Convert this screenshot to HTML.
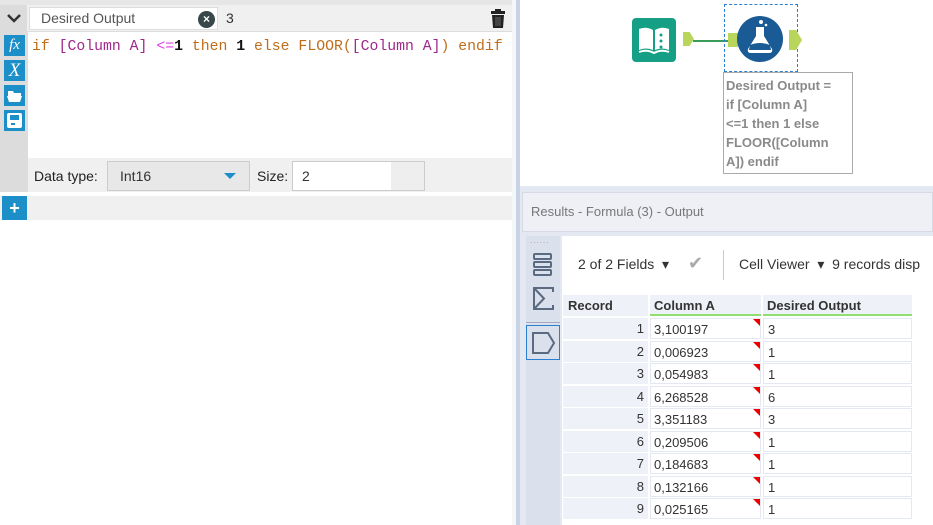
<!DOCTYPE html>
<html><head><style>
*{margin:0;padding:0;box-sizing:border-box}
body{width:933px;height:525px;overflow:hidden;background:#fff;font-family:"Liberation Sans",sans-serif;position:relative}
.a{position:absolute}
.mono{font-family:"Liberation Mono",monospace}
.ic{position:absolute;left:4px;width:21px;height:21px;background:#1c8fc8;color:#fff;text-align:center;font-size:15px;line-height:21px}
.cell{position:absolute;height:21px;font-size:13px;line-height:21px;color:#333}
</style></head><body>
<!-- left panel -->
<div class="a" style="left:0;top:0;width:512px;height:5px;background:#e6e6e6"></div>
<div class="a" style="left:0;top:5px;width:512px;height:27px;background:#f0f0f0;border-bottom:1px solid #ddd"></div>
<div class="a" style="left:0;top:5px;width:27px;height:27px;background:#dcdcdc"></div>
<svg class="a" style="left:6px;top:13px" width="16" height="10"><path d="M2 2l6 6 6-6" fill="none" stroke="#333" stroke-width="2.5"/></svg>
<div class="a" style="left:29px;top:7px;width:189px;height:23px;background:#fff;border:1px solid #ddd;font-size:14px;line-height:21px;padding-left:11px;color:#555">Desired Output</div>
<div class="a" style="left:198px;top:11px;width:17px;height:17px;border-radius:50%;background:#37474a;color:#fff;font-size:12px;text-align:center;line-height:17px;font-weight:bold">×</div>
<div class="a" style="left:226px;top:10px;font-size:14px;color:#333">3</div>
<svg class="a" style="left:490px;top:9px" width="16" height="20"><rect x="1" y="2" width="14" height="3" fill="#222"/><rect x="5" y="0" width="6" height="3" fill="#222"/><path d="M2 6h12l-1 13H3z" fill="#222"/><path d="M6 8v9M8 8v9M10 8v9" stroke="#666"/></svg>
<div class="a" style="left:0;top:32px;width:28px;height:160px;background:#dcdcdc"></div>
<div class="ic" style="top:35px;font-family:'Liberation Serif',serif;font-style:italic">fx</div>
<div class="ic" style="top:60px;font-family:'Liberation Serif',serif;font-style:italic;font-size:19px">X</div>
<div class="ic" style="top:85px"><svg width="21" height="21"><path d="M4 6h5l1 2h7v3H4z" fill="#fff"/><path d="M3 11h15l-2 6H5z" fill="#fff"/></svg></div>
<div class="ic" style="top:110px"><svg width="21" height="21"><rect x="3" y="3" width="15" height="15" rx="2" fill="#fff"/><rect x="6" y="5" width="9" height="5" fill="#1c8fc8"/><rect x="7" y="13" width="4" height="2" fill="#1c8fc8"/></svg></div>
<div class="a mono" style="left:32px;top:39px;font-size:14.8px;white-space:pre;color:#c06d1a">if <span style="color:#a0288a">[Column A]</span> <span style="color:#e040e0">&lt;=</span><span style="color:#111;font-weight:bold">1</span> then <span style="color:#111;font-weight:bold">1</span> else FLOOR(<span style="color:#a0288a">[Column A]</span>) endif</div>
<div class="a" style="left:28px;top:158px;width:484px;height:34px;background:#f0f0f0"></div>
<div class="a" style="left:34px;top:168px;font-size:14px;color:#222">Data type:</div>
<div class="a" style="left:107px;top:161px;width:143px;height:30px;background:#e8e8e8;border:1px solid #ccc;font-size:14px;line-height:28px;padding-left:12px;color:#333">Int16</div>
<div class="a" style="left:224px;top:173px;width:0;height:0;border-left:6px solid transparent;border-right:6px solid transparent;border-top:6px solid #1c8fc8"></div>
<div class="a" style="left:257px;top:168px;font-size:14px;color:#222">Size:</div>
<div class="a" style="left:292px;top:161px;width:133px;height:30px;background:#fff;border:1px solid #ccc;font-size:14px;line-height:28px;padding-left:9px;color:#333">2</div>
<div class="a" style="left:391px;top:162px;width:33px;height:28px;background:#eee"></div>
<div class="a" style="left:0;top:196px;width:512px;height:24px;background:#f0f0f0"></div>
<div class="a" style="left:2px;top:196px;width:25px;height:24px;background:#1c8fc8;color:#fff;font-size:18px;font-weight:bold;text-align:center;line-height:24px">+</div>
<!-- divider -->
<div class="a" style="left:512px;top:0;width:5px;height:525px;background:#f4f6fa"></div>
<div class="a" style="left:516px;top:0;width:4px;height:525px;background:#c9d3e6"></div>
<!-- canvas -->
<svg class="a" style="left:630px;top:15px" width="50" height="50"><rect x="2" y="3" width="44" height="44" rx="4" fill="#15a085"/><path d="M9 14q7-3 14 1v20q-7-3-14 0z M25 15q7-4 14-1v21q-7-3-14 0z" fill="#fff"/><path d="M9 37q8-3 15 1q7-4 15-1" stroke="#fff" stroke-width="2" fill="none"/><circle cx="31" cy="20" r="1.5" fill="#15a085"/><circle cx="31" cy="26" r="1.5" fill="#15a085"/><circle cx="31" cy="32" r="1.5" fill="#15a085"/></svg>
<div class="a" style="left:683px;top:32px;width:11px;height:14px;background:#b7d65b;clip-path:polygon(0 0,60% 0,100% 50%,60% 100%,0 100%)"></div>
<div class="a" style="left:693px;top:40px;width:38px;height:2px;background:#3a9c5a"></div>
<div class="a" style="left:724px;top:4px;width:74px;height:68px;border:1px dashed #2a7fd0"></div>
<div class="a" style="left:728px;top:33px;width:10px;height:14px;background:#b7d65b"></div>
<svg class="a" style="left:736px;top:15px" width="48" height="48"><circle cx="24" cy="24" r="23" fill="#1a5b96"/><path d="M20 12h8v9l8 13q1 4-3 4H15q-4 0-3-4l8-13z" fill="#fff"/><path d="M14 30q10-4 20 0l1 5H13z" fill="#1a5b96"/><circle cx="25" cy="7" r="2" fill="#fff"/><circle cx="30" cy="10" r="1.3" fill="#fff"/></svg>
<div class="a" style="left:789px;top:30px;width:13px;height:20px;background:#b7d65b;clip-path:polygon(0 0,55% 0,100% 50%,55% 100%,0 100%)"></div>
<div class="a" style="left:723px;top:72px;width:130px;height:102px;border:1px solid #aaa;background:#fff;padding:3px 2px;font-size:13px;line-height:19px;font-weight:bold;color:#8a8a8a">Desired Output =<br>if [Column A]<br>&lt;=1 then 1 else<br>FLOOR([Column<br>A]) endif</div>
<!-- results -->
<div class="a" style="left:520px;top:186px;width:413px;height:339px;background:#e3e8f2"></div>
<div class="a" style="left:522px;top:192px;width:411px;height:40px;background:#eef0f6;border:1px solid #d5dae5;font-size:13px;line-height:38px;padding-left:8px;color:#777">Results - Formula (3) - Output</div>
<div class="a" style="left:526px;top:236px;width:34px;height:289px;background:#dbe1ec"></div>
<div class="a" style="left:530px;top:236px;font-size:8px;color:#999;letter-spacing:1px">......</div>
<svg class="a" style="left:532px;top:253px" width="22" height="24"><rect x="2" y="1" width="17" height="5" rx="1" fill="none" stroke="#5a6a80" stroke-width="2"/><rect x="2" y="9" width="17" height="5" rx="1" fill="none" stroke="#5a6a80" stroke-width="2"/><rect x="2" y="17" width="17" height="5" rx="1" fill="none" stroke="#5a6a80" stroke-width="2"/></svg>
<svg class="a" style="left:531px;top:286px" width="24" height="26"><path d="M22 6V2H3v21h19v-4" fill="none" stroke="#5a6a80" stroke-width="2"/><path d="M3 2l10 10.5L3 23" fill="none" stroke="#5a6a80" stroke-width="2"/></svg>
<div class="a" style="left:526px;top:322px;width:34px;height:1px;background:#aab"></div>
<div class="a" style="left:526px;top:325px;width:34px;height:35px;border:1px solid #2a7fd0"></div>
<svg class="a" style="left:531px;top:331px" width="26" height="24"><path d="M2 2h15l6 10-6 10H2z" fill="none" stroke="#5a6a80" stroke-width="2"/></svg>
<div class="a" style="left:562px;top:236px;width:371px;height:56px;background:#fff"></div>
<div class="a" style="left:578px;top:256px;font-size:14px;color:#333">2 of 2 Fields &nbsp;▾</div>
<div class="a" style="left:688px;top:253px;font-size:18px;color:#aaa">✔</div>
<div class="a" style="left:723px;top:250px;width:1px;height:30px;background:#ccc"></div>
<div class="a" style="left:739px;top:256px;font-size:14px;color:#333;white-space:nowrap">Cell Viewer &nbsp;▾ &nbsp;9 records disp</div>
<div class="a" style="left:562px;top:292px;width:371px;height:233px;background:#fff"></div>
<div class="cell" style="left:563px;top:295px;width:85px;background:#eef1f7;padding-left:5px;font-weight:bold">Record</div>
<div class="cell" style="left:650px;top:295px;width:111px;background:#eef1f7;padding-left:4px;font-weight:bold;border-bottom:2px solid #8fe070">Column A</div>
<div class="cell" style="left:763px;top:295px;width:149px;background:#eef1f7;padding-left:4px;font-weight:bold;border-bottom:2px solid #8fe070">Desired Output</div>
<div id="rows"></div>
<script>
var a=["3,100197","0,006923","0,054983","6,268528","3,351183","0,209506","0,184683","0,132166","0,025165"],b=[3,1,1,6,3,1,1,1,1],h="";
for(var i=0;i<9;i++){var t=318+i*22.5;
h+='<div class="cell" style="left:563px;top:'+t+'px;width:85px;background:#eef1f7;text-align:right;padding-right:4px">'+(i+1)+'</div>';
h+='<div class="cell" style="left:650px;top:'+t+'px;width:111px;border:1px solid #e3e8f2;padding-left:3px">'+a[i]+'<div class="a" style="right:0;top:0;width:0;height:0;border-left:7px solid transparent;border-top:7px solid #e00"></div></div>';
h+='<div class="cell" style="left:763px;top:'+t+'px;width:149px;border:1px solid #e3e8f2;padding-left:4px">'+b[i]+'</div>';}
document.getElementById('rows').innerHTML=h;
</script>
</body></html>
